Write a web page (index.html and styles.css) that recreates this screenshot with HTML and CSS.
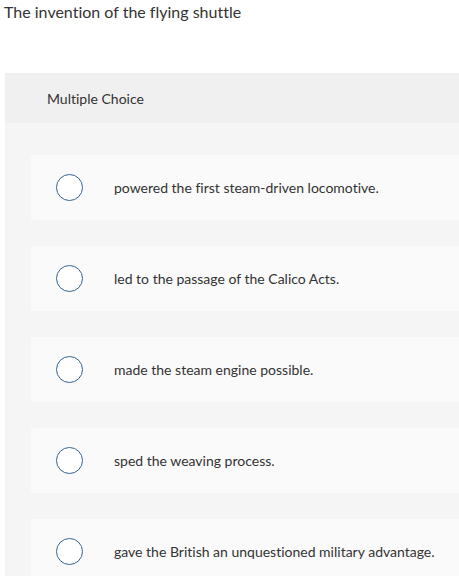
FILE: index.html
```html
<!DOCTYPE html>
<html>
<head>
<meta charset="utf-8">
<link rel="stylesheet" href="styles.css">
</head>
<body>
<div class="title">The invention of the flying shuttle</div>
<div class="panel">
  <div class="panel-head">Multiple Choice</div>
  <div class="panel-body">
    <div class="option"><span class="radio"></span><span class="label">powered the first steam-driven locomotive.</span></div>
    <div class="option"><span class="radio"></span><span class="label">led to the passage of the Calico Acts.</span></div>
    <div class="option"><span class="radio"></span><span class="label">made the steam engine possible.</span></div>
    <div class="option"><span class="radio"></span><span class="label">sped the weaving process.</span></div>
    <div class="option"><span class="radio"></span><span class="label">gave the British an unquestioned military advantage.</span></div>
  </div>
</div>
</body>
</html>
```
FILE: styles.css
```css
html, body {
  margin: 0;
  padding: 0;
  background: #ffffff;
  font-family: Lato, "Open Sans", Arial, sans-serif;
  font-variant-ligatures: none;
  color: #333333;
}
.title {
  padding: 2px 0 0 4px;
  font-size: 16px;
  line-height: 20px;
  height: 73px;
  box-sizing: border-box;
}
.panel {
  margin-left: 5px;
  background: #f5f5f5;
}
.panel-head {
  background: #f0f0f0;
  height: 50px;
  display: flex;
  align-items: center;
  padding-left: 42px;
  font-size: 14px;
}
.panel-body {
  padding: 32px 0 0 26px;
  display: flex;
  flex-direction: column;
  gap: 26px;
}
.option {
  background: #fafafa;
  border-radius: 3px 0 0 3px;
  height: 65px;
  display: flex;
  align-items: center;
  padding-left: 25px;
  font-size: 14px;
}
.radio {
  width: 25px;
  height: 25px;
  border: 1.5px solid #33628f;
  border-radius: 50%;
  background: #ffffff;
  flex: none;
}
.label {
  margin-left: 31px;
}
```
